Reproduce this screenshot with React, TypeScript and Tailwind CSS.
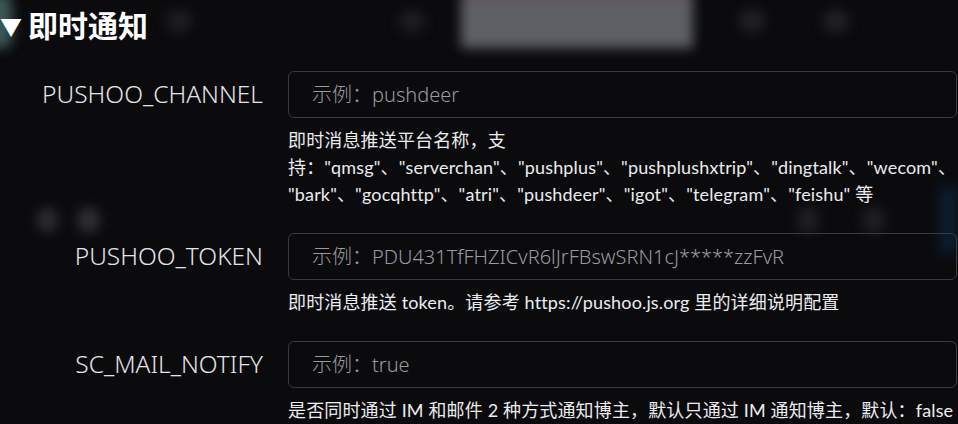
import React from "react";

const font = {
  fontFamily: '"Noto Sans", "Noto Sans CJK SC", sans-serif',
};

const helpFont = {
  fontFamily: 'Lato, "Noto Sans CJK SC", sans-serif',
};

type Field = {
  name: string;
  placeholder: string;
  help: string[];
};

const fields: Field[] = [
  {
    name: "PUSHOO_CHANNEL",
    placeholder: "示例：pushdeer",
    help: [
      "即时消息推送平台名称，支",
      "持：\"qmsg\"、\"serverchan\"、\"pushplus\"、\"pushplushxtrip\"、\"dingtalk\"、\"wecom\"、",
      "\"bark\"、\"gocqhttp\"、\"atri\"、\"pushdeer\"、\"igot\"、\"telegram\"、\"feishu\" 等",
    ],
  },
  {
    name: "PUSHOO_TOKEN",
    placeholder: "示例：PDU431TfFHZICvR6lJrFBswSRN1cJ*****zzFvR",
    help: ["即时消息推送 token。请参考 https://pushoo.js.org 里的详细说明配置"],
  },
  {
    name: "SC_MAIL_NOTIFY",
    placeholder: "示例：true",
    help: ["是否同时通过 IM 和邮件 2 种方式通知博主，默认只通过 IM 通知博主，默认：false"],
  },
];

function Backdrop() {
  // the page behind the panel, blurred out
  return (
    <div className="pointer-events-none absolute inset-0 flex flex-col blur-[6px]">
      <div className="-mt-[10px] flex h-[62px] items-center">
        <div className="-ml-[12px] h-[56px] w-[24px] rounded-full bg-[#3d5858]" />
        <div className="ml-[154px] h-[22px] w-[26px] rounded-full bg-[#1e1e21]" />
        <div className="ml-[207px] h-[22px] w-[26px] rounded-full bg-[#1e1e21]" />
        <div className="ml-[36px] flex h-[58px] w-[232px] flex-col self-start">
          <div className="h-[8px] bg-[#6e4d52]" />
          <div className="flex-1 bg-[#5d6065]" />
        </div>
        <div className="ml-[46px] h-[22px] w-[26px] rounded-full bg-[#222225]" />
        <div className="ml-[58px] h-[22px] w-[26px] rounded-full bg-[#222225]" />
      </div>
      <div className="mt-[153px] flex h-[30px] items-center">
        <div className="ml-[37px] h-[26px] w-[28px] rounded-full bg-[#2c2c2f]" />
        <div className="ml-[19px] h-[26px] w-[30px] rounded-full bg-[#2f2f32]" />
        <div className="ml-[697px] h-[26px] w-[30px] rounded-full bg-[#202023]" />
        <div className="ml-[43px] h-[26px] w-[30px] rounded-full bg-[#202023]" />
        <div className="ml-[54px] h-[70px] w-[26px] rounded-full bg-[#0c1d2f]" />
      </div>
    </div>
  );
}

export default function App() {
  return (
    <div
      className="relative h-[424px] w-[958px] overflow-hidden bg-[#0b0b0e] text-[#e6e6e8]"
      style={font}
    >
      <Backdrop />
      <div className="relative">
        <h2 className="flex h-[51px] items-center gap-[6px] text-[30px] font-bold leading-none text-white">
          <span className="text-[22px]">▼</span>
          <span>即时通知</span>
        </h2>
        <div className="mt-[20px] grid grid-cols-[263px_1fr] gap-x-[25px] pr-[1px]">
          {fields.map((f) => (
            <React.Fragment key={f.name}>
              <div className="flex h-[47px] items-center justify-end whitespace-nowrap text-[24.5px] font-light text-[#e4e4e6]">
                {f.name}
              </div>
              <div className="flex h-[47px] items-center rounded-[6px] border border-[#3a3a3e] px-[23px] text-[20px] font-light text-[#9a9a9f]">
                {f.placeholder}
              </div>
              <div />
              <div
                className="mb-[25px] mt-[9px] text-[18px] leading-[27px] tracking-[0.15px] text-[#ececee]"
                style={helpFont}
              >
                {f.help.map((line) => (
                  <div key={line} className="whitespace-nowrap">
                    {line}
                  </div>
                ))}
              </div>
            </React.Fragment>
          ))}
        </div>
      </div>
    </div>
  );
}
